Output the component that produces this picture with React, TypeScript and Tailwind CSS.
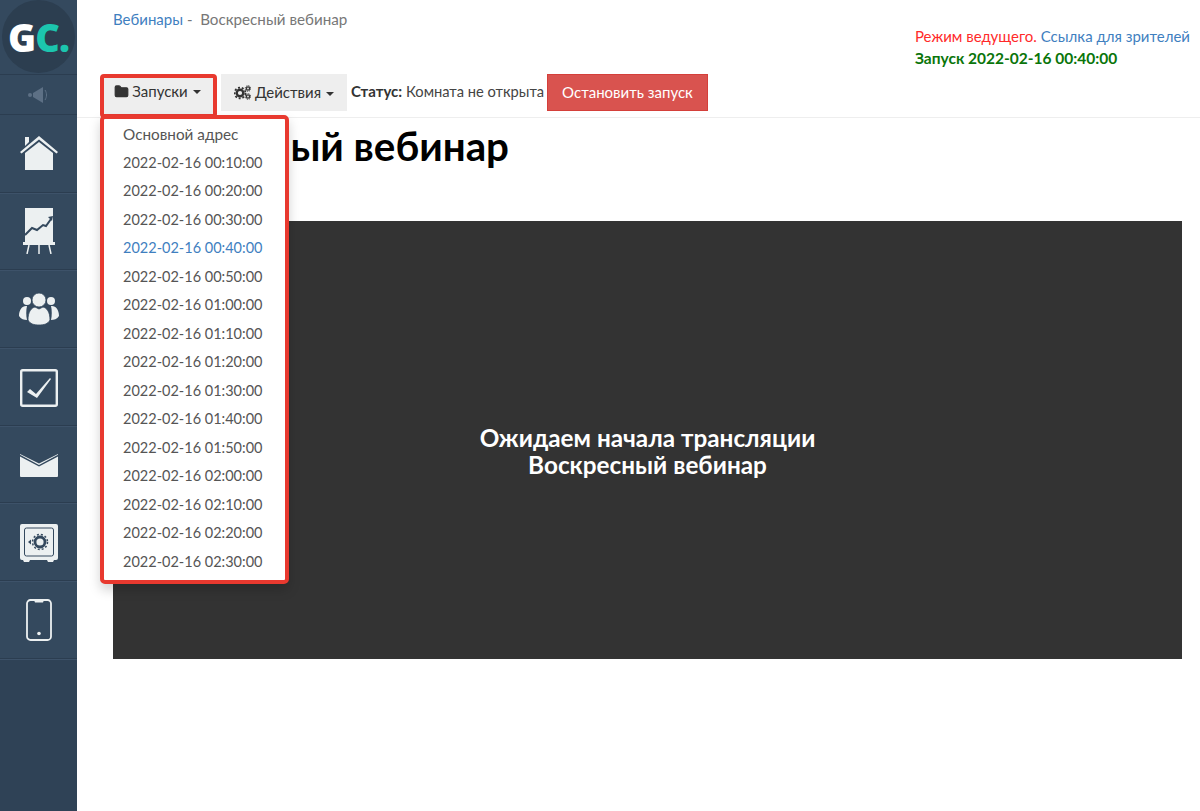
import React from "react";
import { Folder } from "lucide-react";

const runs = [
  "2022-02-16 00:10:00",
  "2022-02-16 00:20:00",
  "2022-02-16 00:30:00",
  "2022-02-16 00:40:00",
  "2022-02-16 00:50:00",
  "2022-02-16 01:00:00",
  "2022-02-16 01:10:00",
  "2022-02-16 01:20:00",
  "2022-02-16 01:30:00",
  "2022-02-16 01:40:00",
  "2022-02-16 01:50:00",
  "2022-02-16 02:00:00",
  "2022-02-16 02:10:00",
  "2022-02-16 02:20:00",
  "2022-02-16 02:30:00",
];

const ICON = "#ecf0f1";

const HomeIcon = () => (
  <svg width="40" height="38" viewBox="0 0 40 38">
    <path d="M6 3h4v5l-4 4z" fill={ICON} />
    <path d="M1 18 20 2l19 16-1.500 1.500L20 5.500 2.500 19.500z" fill={ICON} />
    <path d="M6 19 20 8l14 11v17H6z" fill={ICON} />
  </svg>
);

const ChartIcon = () => (
  <svg width="32" height="46" viewBox="0 0 32 46">
    <rect x="2" y="0" width="28" height="34" fill={ICON} />
    <path d="M2 27l7-7 5 2 6-5 3 1 5-7" fill="none" stroke="#34495e" strokeWidth="2" />
    <path d="M25 9l5-1-1 5z" fill="#34495e" />
    <rect x="0" y="34" width="32" height="3" fill={ICON} />
    <path d="M6 37 4 46M16 37v9M26 37l2 9" stroke={ICON} strokeWidth="1.500" />
  </svg>
);

const GroupIcon = () => (
  <svg width="40" height="34" viewBox="0 0 40 34">
    <circle cx="8" cy="9" r="4" fill={ICON} />
    <circle cx="32" cy="9" r="4" fill={ICON} />
    <path d="M0 24c0-6 3-10 7-10h1c-1 4-1 10 0 14-3 0-6-1-8-4zM40 24c0-6-3-10-7-10h-1c1 4 1 10 0 14 3 0 6-1 8-4z" fill={ICON} />
    <circle cx="20" cy="8" r="7" fill={ICON} stroke="#34495e" strokeWidth="0.800" />
    <path d="M9 28c0-8 3-12 7-13l4 2 4-2c4 1 7 5 7 13-2 4-6 5-11 5s-9-1-11-5z" fill={ICON} stroke="#34495e" strokeWidth="0.800" />
  </svg>
);

const CheckIcon = () => (
  <svg width="38" height="38" viewBox="0 0 38 38" className="mt-[3px]">
    <rect x="1.200" y="1.200" width="35.600" height="35.600" rx="1.500" fill="none" stroke={ICON} strokeWidth="2.400" />
    <path d="M7 23l3-3 6 5L30 9l1 1-14 19z" fill={ICON} />
  </svg>
);

const MailIcon = () => (
  <svg width="38" height="23" viewBox="0 0 38 23" className="mt-[3px]">
    <path d="M0 0 19 9.500 38 0v.8L19 11 0 .8z" fill={ICON} />
    <path d="M0 2.500 19 12.500 38 2.500V22a1 1 0 0 1-1 1H1a1 1 0 0 1-1-1z" fill={ICON} />
  </svg>
);

const SafeIcon = () => (
  <svg width="38" height="38" viewBox="0 0 38 38" className="mt-[2px]">
    <path d="M2 0h34a2 2 0 0 1 2 2v32a2 2 0 0 1-2 2h-2l-1 2h-5l-1-2H10l-1 2H4l-1-2H2a2 2 0 0 1-2-2V2a2 2 0 0 1 2-2z" fill={ICON} />
    <rect x="4.500" y="4" width="29" height="28" rx="2" fill="none" stroke="#34495e" strokeWidth="1" />
    <circle cx="20" cy="18" r="5" fill="none" stroke="#34495e" strokeWidth="2.800" />
    <circle cx="20" cy="18" r="7.500" fill="none" stroke="#34495e" strokeWidth="1.500" strokeDasharray="2 2" />
    <path d="M8 18l3-2.500v5z" fill="#34495e" />
  </svg>
);

const PhoneIcon = () => (
  <svg width="26" height="42" viewBox="0 0 26 42" className="mt-[2px]">
    <rect x="1" y="1" width="24" height="40" rx="3.500" fill="none" stroke={ICON} strokeWidth="1.800" />
    <path d="M8 1h10l-1 2.500H9z" fill={ICON} />
    <circle cx="13" cy="34.500" r="1.800" fill={ICON} />
  </svg>
);

const GearsIcon = () => (
  <svg width="17" height="15" viewBox="0 0 17 15" className="text-[#333]">
    <circle cx="6" cy="8" r="3.300" fill="none" stroke="currentColor" strokeWidth="2.400" />
    <circle cx="6" cy="8" r="5.400" fill="none" stroke="currentColor" strokeWidth="1.800" strokeDasharray="2 1.800" />
    <circle cx="14" cy="3.500" r="1.600" fill="none" stroke="currentColor" strokeWidth="1.400" />
    <circle cx="14" cy="3.500" r="2.800" fill="none" stroke="currentColor" strokeWidth="1" strokeDasharray="1.200 1" />
    <circle cx="14" cy="11.500" r="1.600" fill="none" stroke="currentColor" strokeWidth="1.400" />
    <circle cx="14" cy="11.500" r="2.800" fill="none" stroke="currentColor" strokeWidth="1" strokeDasharray="1.200 1" />
  </svg>
);

const Caret = () => (
  <span className="inline-block ml-[5px] align-middle border-x-[4px] border-t-[4px] border-x-transparent border-t-[#333]" />
);

function NavRow({ children }: { children: React.ReactNode }) {
  return (
    <div className="h-[77.700px] flex items-center justify-center border-b border-[#2b3d50] shadow-[0_1px_0_#3d5269]">
      {children}
    </div>
  );
}

export default function App() {
  return (
    <div className="flex min-h-[811px] bg-white font-['Lato','Open_Sans',sans-serif] text-[15px] text-[#333]">
      <aside className="w-[77px] shrink-0 bg-[#2f4256]">
        <div className="bg-[#34495e]">
          <div className="h-[75px] flex justify-center border-b border-[#2b3d50]">
            <div className="w-[73px] h-[73px] rounded-full bg-[#2c3e50] flex items-center justify-center font-['Open_Sans',sans-serif] text-[38px] font-extrabold tracking-[-1px] leading-none">
              <span className="text-white">G</span>
              <span className="text-[#1cc5ae]">C.</span>
            </div>
          </div>
          <div className="h-[40px] flex items-center justify-center border-b border-[#2b3d50]">
            <svg width="24" height="16" viewBox="0 0 24 16" fill="#5d7085">
              <circle cx="3" cy="8" r="2" />
              <path d="M6 6l10-6v16L6 10z" />
              <path d="M18 3c2 3 2 7 0 10" fill="none" stroke="#5d7085" />
            </svg>
          </div>
          <NavRow><HomeIcon /></NavRow>
          <NavRow><ChartIcon /></NavRow>
          <NavRow><GroupIcon /></NavRow>
          <NavRow><CheckIcon /></NavRow>
          <NavRow><MailIcon /></NavRow>
          <NavRow><SafeIcon /></NavRow>
          <NavRow><PhoneIcon /></NavRow>
        </div>
      </aside>

      <main className="flex-1 min-w-0">
        <div className="h-[74px] flex justify-between">
          <div className="pl-[36px] pt-[9px] text-[15px] leading-[20px] text-[#777]">
            <a className="text-[#3f7fbf]">Вебинары</a>
            <span> - &nbsp;</span>
            <span className="text-[15.200px]">Воскресный вебинар</span>
          </div>
          <div className="pt-[25px] pr-[10px] leading-[22px] text-[15px] text-left">
            <div>
              <span className="text-[#ff2a2a]">Режим ведущего.</span>{" "}
              <a className="text-[#3f7fbf]">Ссылка для зрителей</a>
            </div>
            <div className="font-bold text-[15.500px] text-[#0a750a]">Запуск 2022-02-16 00:40:00</div>
          </div>
        </div>

        <div className="h-[44px] pl-[23px] flex items-start border-b border-[#eeeeee]">
          <div className="relative">
            <button className="h-[44px] w-[117px] pb-[9px] pr-[2px] bg-[#eeeeee] border-[4px] border-[#e8392f] rounded-[4px] flex items-center justify-center">
              <Folder size={15} fill="#333" className="mr-[3px] text-[#333]" />
              Запуски
              <Caret />
            </button>
            <div className="absolute z-10 left-0 top-[41px] w-[189px] pt-px pb-[4px] bg-white border-[4px] border-[#e8392f] rounded-[5px] shadow-[0_6px_12px_rgba(0,0,0,0.175)] text-[#555]">
              <div className="h-[28.500px] pl-[19px] leading-[28.500px] text-[15.300px] whitespace-nowrap">Основной адрес</div>
              {runs.map((r) => (
                <div
                  key={r}
                  className={`h-[28.500px] pl-[19px] leading-[28.500px] text-[14.500px] whitespace-nowrap ${
                    r === "2022-02-16 00:40:00" ? "text-[#3f7fbf]" : ""
                  }`}
                >
                  {r}
                </div>
              ))}
            </div>
          </div>
          <button className="ml-[4px] h-[37px] w-[126px] bg-[#eeeeee] flex items-center justify-center gap-[4px]">
            <GearsIcon />
            <span>Действия<Caret /></span>
          </button>
          <div className="ml-[4px] w-[193px] h-[37px] leading-[34px] whitespace-nowrap">
            <b>Статус:</b> <span className="text-[14.700px] text-[#444]">Комната не открыта</span>
          </div>
          <button className="ml-[3px] h-[37px] w-[161px] bg-[#d9534f] border border-[#d43f3a] text-white">
            Остановить запуск
          </button>
        </div>

        <div className="pl-[36px] pr-[18px]">
          <h1 className="mt-[5px] h-[48px] text-[40.300px] leading-[46px] font-bold text-black">Воскресный вебинар</h1>
          <div className="mt-[50px] h-[438px] pt-[21px] bg-[#333333] flex items-center justify-center">
            <div className="text-center text-white text-[24.300px] leading-[27px] font-bold">
              Ожидаем начала трансляции
              <br />
              Воскресный вебинар
            </div>
          </div>
        </div>
      </main>
    </div>
  );
}
